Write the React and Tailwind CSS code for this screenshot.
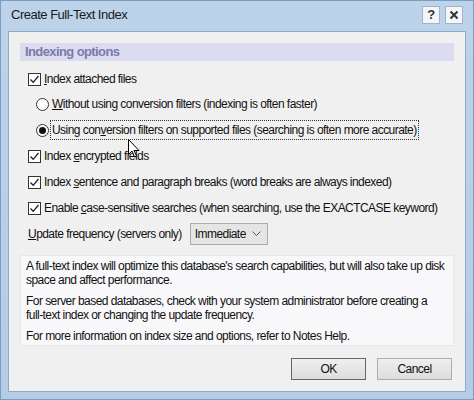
import React from 'react';

const font = { fontFamily: '"Liberation Sans", Arial, sans-serif' };

function Check({ children }) {
  return (
    <div className="flex items-center h-[16px]">
      <span className="w-[13px] h-[13px] border border-[#333] bg-white flex items-center justify-center">
        <svg width="11" height="11" viewBox="0 0 11 11">
          <path d="M1.5 5.5 L4.2 8.3 L9.5 2" fill="none" stroke="#222" strokeWidth="1.3" />
        </svg>
      </span>
      <span className="ml-[3px] whitespace-nowrap">{children}</span>
    </div>
  );
}

function Radio({ checked, focus, children }) {
  return (
    <div className="flex items-center h-[16px]">
      <span className="w-[13px] h-[13px] rounded-full border border-[#333] bg-white flex items-center justify-center">
        {checked && <span className="w-[7px] h-[7px] rounded-full bg-[#111]" />}
      </span>
      <span className={'ml-[2px] px-[1px] whitespace-nowrap ' + (focus ? 'outline outline-1 outline-dotted outline-[#333]' : '')}>{children}</span>
    </div>
  );
}

export default function App() {
  return (
    <div className="w-[474px] h-[400px] bg-gradient-to-b from-[#bcd3ea] to-[#b4cce6] border border-[#7e9cc0] flex flex-col text-[#111] text-[12px] tracking-[-0.55px]" style={font}>
      {/* title bar */}
      <div className="h-[30px] flex items-center pl-[10px] pr-[10px]">
        <span className="text-[13px] text-[#1a1a1a] mt-[-2px] tracking-[-0.5px]">Create Full-Text Index</span>
        <div className="ml-auto flex gap-[5px] mt-[-3px]">
          <span className="w-[18px] h-[18px] bg-[#f4f6f9] border border-[#9fb3c9] flex items-center justify-center text-[13px] font-bold text-[#333]">?</span>
          <span className="w-[18px] h-[18px] bg-[#f4f6f9] border border-[#9fb3c9] flex items-center justify-center">
            <svg width="10" height="10" viewBox="0 0 10 10">
              <path d="M1.5 1.5 L8.5 8.5 M8.5 1.5 L1.5 8.5" stroke="#333" strokeWidth="2" />
            </svg>
          </span>
        </div>
      </div>

      {/* client area */}
      <div className="mx-[7px] h-[361px] bg-[#f0f0f0] border border-[#8faacb] relative flex flex-col px-[11px] pt-[11px]">
        <div className="h-[18px] bg-[#dcdcf0] flex items-center px-[5px] text-[13px] text-[#7a7aa8] font-bold tracking-[-0.6px]">
          Indexing options
        </div>

        <div className="pl-[8px] mt-[10px] flex flex-col">
          <Check><u>I</u>ndex attached files</Check>
          <div className="pl-[8px] mt-[9px] flex flex-col gap-[10px]">
            <Radio><u>W</u>ithout using conversion filters (indexing is often faster)</Radio>
            <Radio checked focus>Using con<u>v</u>ersion filters on supported files (searching is often more accurate)</Radio>
          </div>
          <div className="mt-[10px] flex flex-col gap-[10px]">
            <Check>Index <u>e</u>ncrypted fields</Check>
            <Check>Index <u>s</u>entence and paragraph breaks (word breaks are always indexed)</Check>
            <Check>Enable <u>c</u>ase-sensitive searches (when searching, use the EXACTCASE keyword)</Check>
          </div>
          <div className="mt-[7px] flex items-center">
            <span><u>U</u>pdate frequency (servers only)</span>
            <div className="ml-[8px] w-[78px] h-[22px] bg-[#e5e5e5] border border-[#acacac] flex items-center pl-[4px] pr-[6px]">
              <span>Immediate</span>
              <svg className="ml-auto" width="9" height="6" viewBox="0 0 9 6">
                <path d="M0.5 0.5 L4.5 4.5 L8.5 0.5" fill="none" stroke="#555" strokeWidth="1" />
              </svg>
            </div>
          </div>
        </div>

        <div className="mt-[10px] bg-[#f8f8fa] border border-[#e6e6ec] px-[5px] pt-[3px] pb-[2px] leading-[14px] flex flex-col gap-[7px]">
          <p>A full-text index will optimize this database's search capabilities, but will also take up disk<br />space and affect performance.</p>
          <p>For server based databases, check with your system administrator before creating a<br />full-text index or changing the update frequency.</p>
          <p>For more information on index size and options, refer to Notes Help.</p>
        </div>

        <div className="mt-[12px] flex justify-end gap-[11px] pr-[2px]">
          <button className="w-[75px] h-[22px] bg-gradient-to-b from-[#efefef] to-[#dddddd] border border-[#666] text-[12px]">OK</button>
          <button className="w-[75px] h-[22px] bg-gradient-to-b from-[#efefef] to-[#dddddd] border border-[#adadad] text-[12px]">Cancel</button>
        </div>

        {/* mouse pointer */}
        <svg className="absolute left-[119px] top-[107px]" width="13" height="20" viewBox="0 0 13 20">
          <path d="M0.5 0.5 L0.5 15.5 L4 12 L6.5 18 L8.5 17 L6 11.5 L11 11.5 Z" fill="#fff" stroke="#000" strokeWidth="1" />
        </svg>
      </div>
    </div>
  );
}
